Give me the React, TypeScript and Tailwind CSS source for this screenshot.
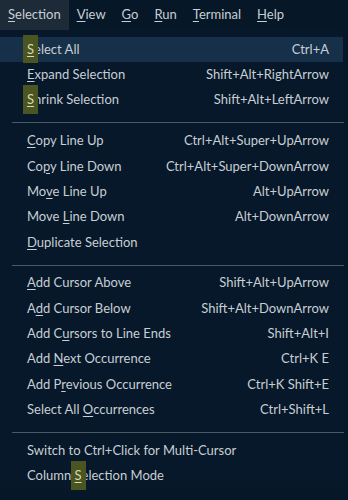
import React from "react";

type Item = {
  label: string;
  m?: number; // index of mnemonic letter
  box?: boolean;
  key?: string;
  active?: boolean;
};

const groups: Item[][] = [
  [
    { label: "Select All", m: 0, box: true, key: "Ctrl+A", active: true },
    { label: "Expand Selection", m: 0, key: "Shift+Alt+RightArrow" },
    { label: "Shrink Selection", m: 0, box: true, key: "Shift+Alt+LeftArrow" },
  ],
  [
    { label: "Copy Line Up", m: 0, key: "Ctrl+Alt+Super+UpArrow" },
    { label: "Copy Line Down", m: 2, key: "Ctrl+Alt+Super+DownArrow" },
    { label: "Move Line Up", m: 2, key: "Alt+UpArrow" },
    { label: "Move Line Down", m: 5, key: "Alt+DownArrow" },
    { label: "Duplicate Selection", m: 0 },
  ],
  [
    { label: "Add Cursor Above", m: 0, key: "Shift+Alt+UpArrow" },
    { label: "Add Cursor Below", m: 1, key: "Shift+Alt+DownArrow" },
    { label: "Add Cursors to Line Ends", m: 5, key: "Shift+Alt+I" },
    { label: "Add Next Occurrence", m: 4, key: "Ctrl+K E" },
    { label: "Add Previous Occurrence", m: 5, key: "Ctrl+K Shift+E" },
    { label: "Select All Occurrences", m: 11, key: "Ctrl+Shift+L" },
  ],
  [
    { label: "Switch to Ctrl+Click for Multi-Cursor" },
    { label: "Column Selection Mode", m: 7, box: true },
  ],
];

function Label({ item }: { item: Item }) {
  const { label, m, box } = item;
  if (m === undefined) return <span>{label}</span>;
  const before = label.slice(0, m);
  const ch = label[m];
  const after = label.slice(m + 1);
  return (
    <span className="whitespace-pre">
      {before}
      {box ? (
        <span className="relative inline-block">
          <span className="absolute left-[-4px] right-[-4px] top-[-5px] bottom-[-4px] bg-[#4a5522]" />
          <span className="relative underline underline-offset-2 text-[#d6dab0]">{ch}</span>
        </span>
      ) : (
        <span className="underline underline-offset-2">{ch}</span>
      )}
      {after}
    </span>
  );
}

function MenuBarItem({ label, active }: { label: string; active?: boolean }) {
  return (
    <div
      className={
        "h-full flex items-center px-2 " + (active ? "bg-[#1d2a38]" : "")
      }
    >
      <span>
        <span className="underline underline-offset-2">{label[0]}</span>
        {label.slice(1)}
      </span>
    </div>
  );
}

export default function App() {
  return (
    <div
      className="w-[348px] h-[500px] overflow-hidden bg-[#061727] text-[#c8ced4] text-[13px]"
      style={{ fontFamily: "Lato, 'Noto Sans', sans-serif" }}
    >
      <div className="h-[30px] flex items-stretch bg-[#061727]">
        <MenuBarItem label="Selection" active />
        <MenuBarItem label="View" />
        <MenuBarItem label="Go" />
        <MenuBarItem label="Run" />
        <MenuBarItem label="Terminal" />
        <MenuBarItem label="Help" />
      </div>
      <div className="w-[343px] bg-[#061829] pt-[7px]">
        {groups.map((g, gi) => (
          <div key={gi}>
            {gi > 0 && (
              <div className="pt-[9.6px] pb-[5px] pl-[12px]">
                <div className="h-px bg-[#4b5866] w-[332px]" />
              </div>
            )}
            {g.map((it, i) => (
              <div
                key={i}
                className={
                  "h-[25.3px] flex items-center justify-between pl-[27px] pr-[14px] " +
                  (it.active ? "bg-[#17304a]" : "")
                }
              >
                <Label item={it} />
                {it.key && <span className="whitespace-pre">{it.key}</span>}
              </div>
            ))}
          </div>
        ))}
      </div>
    </div>
  );
}
